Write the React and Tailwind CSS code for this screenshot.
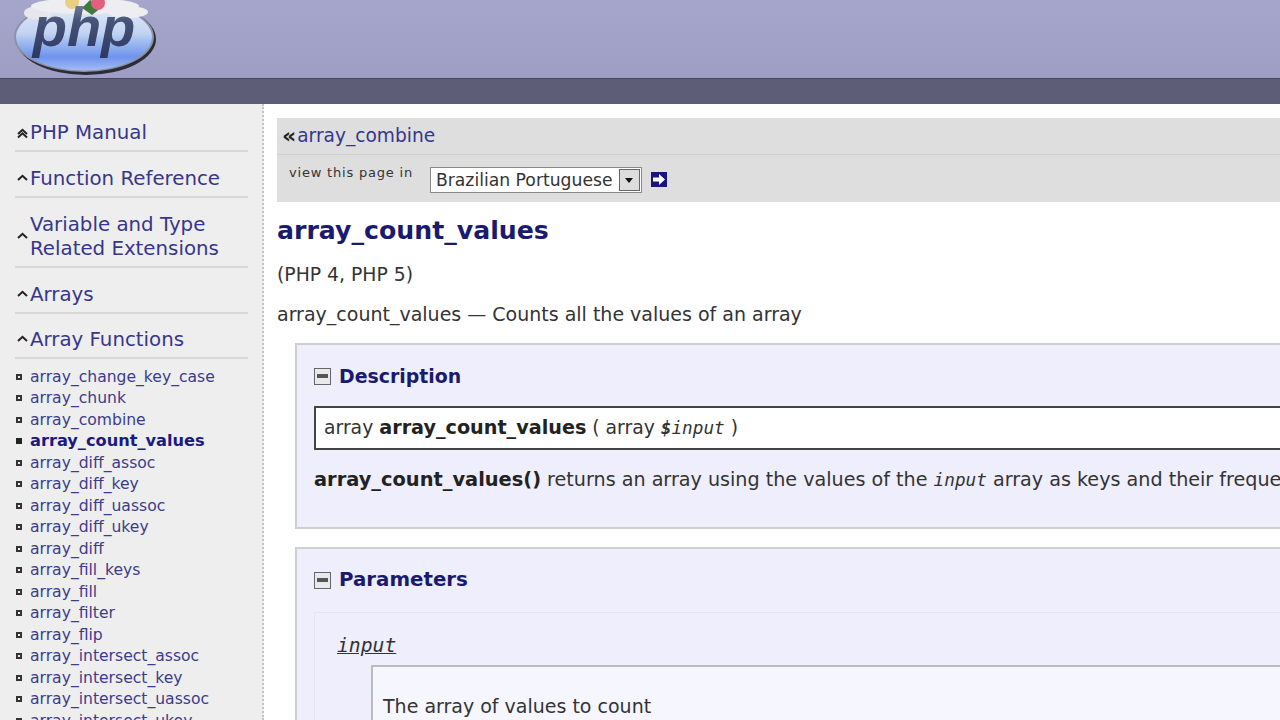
const FONT = "font-['DejaVu_Sans','Liberation_Sans',sans-serif]";
const MONO = "font-['DejaVu_Sans_Mono',monospace]";

const FUNCTIONS = [
    'array_change_key_case', 'array_chunk', 'array_combine', 'array_count_values',
    'array_diff_assoc', 'array_diff_key', 'array_diff_uassoc', 'array_diff_ukey',
    'array_diff', 'array_fill_keys', 'array_fill', 'array_filter', 'array_flip',
    'array_intersect_assoc', 'array_intersect_key', 'array_intersect_uassoc', 'array_intersect_ukey',
];

const PhpLogo = () => (
    <svg width="160" height="78" viewBox="0 0 160 78" className="block">
        <defs>
            <linearGradient id="oval" x1="0" y1="0" x2="0" y2="1">
                <stop offset="0" stopColor="#e4ebf8" />
                <stop offset="0.45" stopColor="#c2d3f2" />
                <stop offset="0.55" stopColor="#a5bff0" />
                <stop offset="0.8" stopColor="#6f93ee" />
                <stop offset="1" stopColor="#a4bcf0" />
            </linearGradient>
            <linearGradient id="letters" x1="0" y1="0" x2="0" y2="1">
                <stop offset="0" stopColor="#8d93ab" />
                <stop offset="0.4" stopColor="#4a5478" />
                <stop offset="1" stopColor="#2c3762" />
            </linearGradient>
        </defs>
        <ellipse cx="86" cy="39" rx="70" ry="36" fill="#2a2c38" />
        <ellipse cx="84" cy="37" rx="70" ry="35" fill="#8e92a2" />
        <ellipse cx="84" cy="37" rx="68" ry="33.5" fill="url(#oval)" />
        <ellipse cx="38" cy="13" rx="14" ry="7" fill="#e6e6ec" />
        <ellipse cx="128" cy="12" rx="20" ry="6" fill="#eeeef2" />
        <ellipse cx="85" cy="6" rx="54" ry="8" fill="#eeeef2" />
        <circle cx="72" cy="2" r="7" fill="#e8d080" />
        <path d="M82 8 L92 15 L102 7 L90 0 Z" fill="#3f7a3a" />
        <circle cx="98" cy="3" r="7" fill="#e0607e" />
        <text x="84" y="46" textAnchor="middle" fontFamily="'Liberation Sans', sans-serif" fontSize="56" fontWeight="700" fontStyle="italic" fill="url(#letters)">php</text>
    </svg>
);

const Chevron = ({ double }) => (
    <svg width="11" height="11" viewBox="0 0 11 11" className="ml-[2px] mr-[2px] shrink-0">
        <path d="M1 6 L5.5 1.8 L10 6" fill="none" stroke="#222" strokeWidth="2" />
        {double && <path d="M1 9.5 L5.5 5.3 L10 9.5" fill="none" stroke="#222" strokeWidth="2" />}
    </svg>
);

const SideHead = ({ double, children, className = 'mb-[15px]' }) => (
    <div className={`flex items-center border-b-2 border-[#d8d8d8] pb-[5px] ${className}`}>
        <Chevron double={double} />
        <span className="text-[19.8px] leading-[24px] text-[#36368c]">{children}</span>
    </div>
);

const Section = ({ title, titleClass, children, className }) => (
    <div className={`w-[1100px] border-2 border-[#cfcfcf] bg-[#eeeefc] pl-[17px] ${className}`}>
        <div className="flex items-center gap-[8px]">
            <span className="flex h-[17px] w-[17px] items-center justify-center border border-[#666] bg-[#e8e8ee]">
                <span className="h-[4px] w-[11px] bg-[#555]" />
            </span>
            <h3 className={`font-bold leading-[26px] text-[#1a1a6e] ${titleClass}`}>{title}</h3>
        </div>
        {children}
    </div>
);

export default function App() {
    return (
        <div className={`h-[720px] w-[1280px] overflow-hidden bg-white ${FONT}`}>
            <div className="h-[78px] overflow-hidden bg-gradient-to-b from-[#a6a6cc] to-[#9e9ec4]">
                <PhpLogo />
            </div>
            <div className="h-[26px] border-t border-[#45455c] bg-[#5d5d78]" />
            <div className="flex h-[616px]">
                <aside className="w-[264px] shrink-0 overflow-hidden border-r-2 border-dotted border-[#c4c4c4] bg-[#eeeeee] pl-[15px] pr-[14px] pt-[17px]">
                    <SideHead double>PHP Manual</SideHead>
                    <SideHead>Function Reference</SideHead>
                    <SideHead>Variable and Type<br />Related Extensions</SideHead>
                    <SideHead className="mb-[14px]">Arrays</SideHead>
                    <SideHead className="mb-[7px]">Array Functions</SideHead>
                    <ul>
                        {FUNCTIONS.map((name) => (
                            <li key={name} className="flex h-[21.5px] items-center">
                                <span className={`ml-px mr-[8px] h-[6px] w-[6px] border-2 ${name === 'array_count_values' ? 'border-[#222] bg-[#222]' : 'border-[#333] bg-[#eee]'}`} />
                                <span className={`leading-[20px] ${name === 'array_count_values' ? 'text-[16.2px] font-bold text-[#1a1a80]' : 'text-[15.6px] text-[#3c3c8c]'}`}>{name}</span>
                            </li>
                        ))}
                    </ul>
                </aside>
                <main className="min-w-0 flex-1 overflow-hidden pl-[13px] pt-[14px] text-[#333]">
                    <div className="h-[84px] w-[1100px] bg-[#dedede]">
                        <div className="flex h-[37px] items-center border-b border-[#cfcfcf] pl-[5px]">
                            <span className="mr-px text-[22px] font-bold leading-none text-[#222]">«</span>
                            <span className="text-[18.6px] text-[#36368c]">array_combine</span>
                        </div>
                        <div className="flex items-start pl-[12px] pt-[9px]">
                            <span className="text-[13px] leading-[18px] tracking-[0.8px] text-[#333]">view this page in</span>
                            <div className="ml-[17px] mt-[3px] flex h-[26px] w-[212px] items-center justify-between border border-[#888] bg-white pl-[5px] pr-[1px]">
                                <span className="pt-[2px] text-[17.2px] text-[#333]">Brazilian Portuguese</span>
                                <span className="flex h-[22px] w-[21px] items-center justify-center border border-[#666] bg-[#ddd]">
                                    <span className="border-x-[4px] border-t-[5px] border-x-transparent border-t-[#111]" />
                                </span>
                            </div>
                            <span className="ml-[9px] mt-[8px] flex h-[15px] w-[16px] items-center justify-center bg-[#16167e]">
                                <svg width="12" height="11" viewBox="0 0 12 11"><path d="M0 3.5h6V0l6 5.5L6 11V7.5H0z" fill="#fff" /></svg>
                            </span>
                        </div>
                    </div>
                    <h1 className="mt-[14px] text-[25.2px] font-bold leading-[30px] text-[#1a1a6e]">array_count_values</h1>
                    <p className="mt-[17px] text-[18.8px] leading-[24px]">(PHP 4, PHP 5)</p>
                    <p className="mt-[15px] text-[19px] leading-[24px]">array_count_values — Counts all the values of an array</p>
                    <Section title="Description" titleClass="text-[18.9px]" className="ml-[18px] mt-[17px] h-[186px] pt-[18px]">
                        <div className="mt-[17px] flex h-[44px] w-[1060px] items-center border-2 border-[#444] bg-white pl-[8px] text-[18.8px]">
                            array&nbsp;<b className="text-[19.2px] text-[#222]">array_count_values</b>&nbsp;( array&nbsp;
                            <span className={`${MONO} text-[17.7px] font-bold italic`}>$</span>
                            <span className={`${MONO} text-[17.7px] italic`}>input</span>&nbsp;)
                        </div>
                        <p className="mt-[18px] whitespace-nowrap text-[19.15px] leading-[24px]">
                            <b className="text-[19.4px] text-[#222]">array_count_values()</b> returns an array using the values of the{' '}
                            <span className={`${MONO} text-[17.7px] italic`}>input</span> array as keys and their frequencies as values.
                        </p>
                    </Section>
                    <Section title="Parameters" titleClass="text-[19.8px]" className="ml-[18px] mt-[18px] h-[300px] pt-[18px]">
                        <div className="mt-[19px] h-[200px] border-l border-t border-[#e4e4f2] pl-[22px] pt-[20px]">
                            <span className={`${MONO} text-[19.7px] italic leading-[26px] underline`}>input</span>
                            <div className="ml-[34px] mt-[6px] h-[100px] border-l-2 border-t-2 border-[#bbb] bg-[#f6f6fe] pl-[10px] pt-[27px] text-[19px] leading-[24px]">
                                The array of values to count
                            </div>
                        </div>
                    </Section>
                </main>
            </div>
        </div>
    );
}
